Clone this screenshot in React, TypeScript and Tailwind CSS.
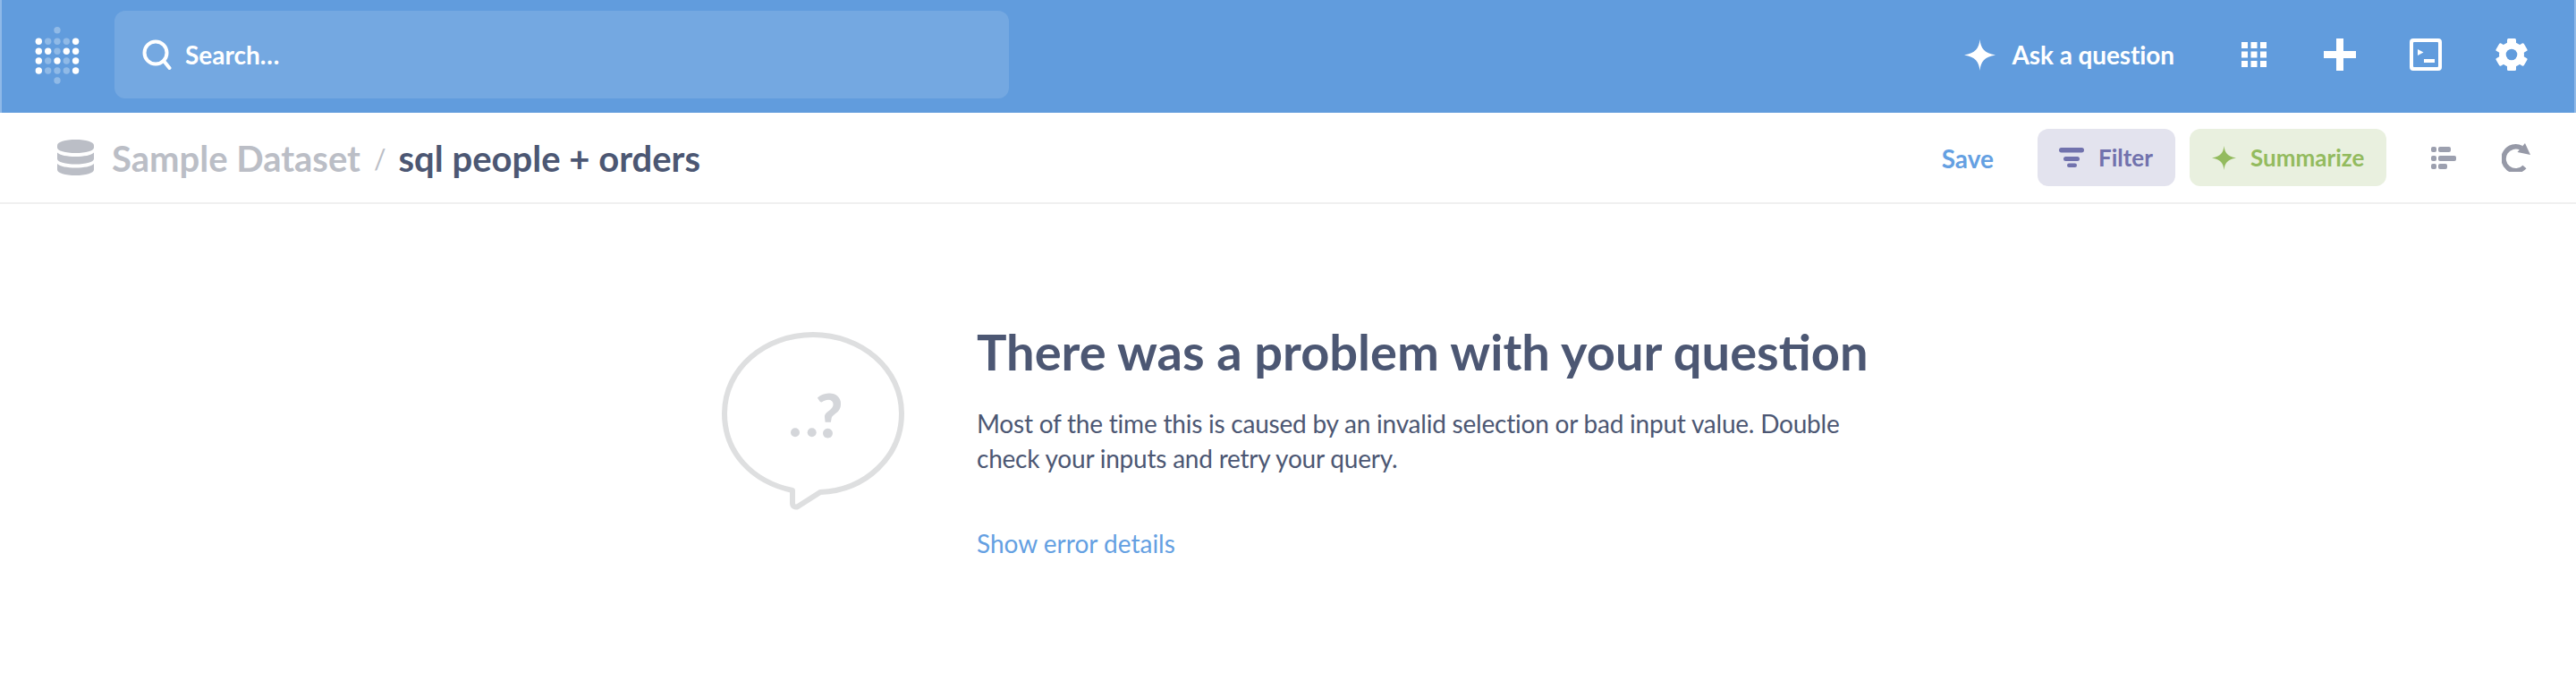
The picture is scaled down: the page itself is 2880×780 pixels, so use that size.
const logoDots = [
  [64, 33.7, 0.3],
  [43.3, 46.3, 1], [53.7, 46.3, 0.3], [64, 46.3, 0.3], [74.3, 46.3, 0.3], [84.6, 46.3, 1],
  [43.3, 57.2, 1], [53.7, 57.2, 1], [64, 57.2, 0.3], [74.3, 57.2, 1], [84.6, 57.2, 1],
  [43.3, 68, 1], [53.7, 68, 0.3], [64, 68, 1], [74.3, 68, 0.3], [84.6, 68, 1],
  [43.3, 79, 1], [53.7, 79, 0.3], [64, 79, 0.3], [74.3, 79, 0.3], [84.6, 79, 1],
  [64, 90, 0.3],
];

const Logo = () => (
  <svg width="126" height="126" viewBox="2 0 126 126" className="shrink-0">
    {logoDots.map(([x, y, o], i) => (
      <circle key={i} cx={x} cy={y} r="3.7" fill="#fff" fillOpacity={o} />
    ))}
  </svg>
);

const Star = ({ size, className }: { size: number; className: string }) => (
  <svg width={size} height={size} viewBox="0 0 32 32" className={className} fill="currentColor">
    <path d="M16 0C17 9.500 20.500 14 32 16 20.500 18 17 22.500 16 32 15 22.500 11.500 18 0 16 11.500 14 15 9.500 16 0Z" />
  </svg>
);

const SearchIcon = () => (
  <svg width="34" height="34" viewBox="0 0 34 34" fill="none" stroke="#fff" strokeWidth="4">
    <circle cx="15" cy="15" r="12.500" />
    <path d="M24 24l6.500 8" strokeLinecap="round" />
  </svg>
);

const GridIcon = () => (
  <svg width="28" height="28" viewBox="0 0 28 28" fill="#fff">
    {[0, 10.5, 21].map((y) =>
      [0, 10.5, 21].map((x) => <rect key={`${x}-${y}`} x={x} y={y} width="7" height="7" />)
    )}
  </svg>
);

const PlusIcon = () => (
  <svg width="36" height="36" viewBox="0 0 36 36" fill="#fff">
    <path d="M14 0h8v14h14v8H22v14h-8V22H0v-8h14z" />
  </svg>
);

const TerminalIcon = () => (
  <svg width="36" height="36" viewBox="0 0 36 36">
    <path
      fillRule="evenodd"
      fill="#fff"
      d="M4 0h28a4 4 0 0 1 4 4v28a4 4 0 0 1-4 4H4a4 4 0 0 1-4-4V4a4 4 0 0 1 4-4zm0 5v26a1 1 0 0 0 1 1h26a1 1 0 0 0 1-1V5a1 1 0 0 0-1-1H5a1 1 0 0 0-1 1z"
    />
    <path fill="#fff" d="M9 12l6.500 3.600L9 19zM16 23h12v4H16z" />
  </svg>
);

const GearIcon = () => (
  <svg width="36" height="36" viewBox="0 0 36 36" fill="#fff">
    <circle cx="18" cy="18" r="14" />
    {[0, 60, 120, 180, 240, 300].map((a) => (
      <rect key={a} x="13" y="0" width="10" height="10" rx="1.500" transform={`rotate(${a} 18 18)`} />
    ))}
    <circle cx="18" cy="18" r="6.300" fill="#619CDD" />
  </svg>
);

const DatabaseIcon = () => (
  <svg width="41" height="40" viewBox="0 0 41 40" fill="#BBBEC6" className="shrink-0">
    <path d="M0 6.500C0 2.500 9 0 20.500 0S41 2.500 41 6.500v2.500c0 3.500-9 6-20.500 6S0 12.500 0 9z" />
    <path d="M0 14.500c3 3 11 4.500 20.500 4.500S38 17.500 41 14.500v7c0 3.500-9 6-20.500 6S0 25 0 21.500z" />
    <path d="M0 27c3 3 11 4.500 20.500 4.500S38 30 41 27v6.500c0 4-9 6.500-20.500 6.500S0 37.500 0 33.500z" />
  </svg>
);

const FilterIcon = () => (
  <svg width="28" height="22" viewBox="0 0 28 22" fill="#7172AD">
    <rect x="0" y="0" width="28" height="5.500" rx="2.700" />
    <rect x="5" y="10" width="18" height="5" rx="2.500" />
    <rect x="9" y="17.500" width="11" height="4.500" rx="2.200" />
  </svg>
);

const ViewsIcon = () => (
  <svg width="28" height="25" viewBox="0 0 28 25" fill="#9CA0AF">
    <rect x="0" y="0" width="6" height="6" rx="2" />
    <rect x="8" y="0" width="14" height="6" rx="2" />
    <rect x="0" y="10" width="6" height="6" rx="2" />
    <rect x="8" y="10" width="20" height="6" rx="2" />
    <rect x="0" y="19" width="6" height="6" rx="2" />
    <rect x="8" y="19" width="10" height="6" rx="2" />
  </svg>
);

const RefreshIcon = () => (
  <svg width="32" height="32" viewBox="0 0 32 32" fill="none">
    <path d="M25.500 26.500A13.500 13.500 0 1 1 22 5.500" stroke="#9699A7" strokeWidth="5.500" />
    <path d="M26 0l6 13-14.500-3z" fill="#9699A7" />
  </svg>
);

const ErrorBubble = () => (
  <svg width="210" height="203" viewBox="47 31 210 203" fill="none" className="mt-[13px] shrink-0">
    <path
      d="M126 208C80 198 50 165 50 122 50 72 95 34 149 34s99 38 99 88c0 48-40 86-91 88l-25 16c-3 1.500-6 0-6-4z"
      stroke="#DEDFE0"
      strokeWidth="6"
      strokeLinejoin="round"
    />
    <circle cx="129" cy="143.300" r="5" fill="#D4D6DA" />
    <circle cx="147.700" cy="143.300" r="5" fill="#D4D6DA" />
    <text
      x="167"
      y="148.500"
      textAnchor="middle"
      fill="#D4D6DA"
      fontSize="66"
      fontWeight="900"
      fontFamily="Lato, sans-serif"
    >
      ?
    </text>
  </svg>
);

export default function App() {
  return (
    <div className="min-h-[780px] bg-white font-['Lato',sans-serif] text-[#4C5773]">
      <nav className="flex h-[126px] items-center border-x-2 border-[#8FB9E8] bg-[#619CDD] pr-[52px] text-white">
        <Logo />
        <div className="mb-1 flex h-[98px] w-[1000px] items-center gap-[14px] rounded-xl bg-white/[0.12] pl-[31px] text-[28px] font-bold">
          <SearchIcon />
          <span>Search…</span>
        </div>
        <div className="mb-1 ml-auto flex items-center">
          <Star size={35} className="text-white" />
          <span className="ml-[19px] text-[28px] font-bold tracking-[-0.1px]">Ask a question</span>
          <span className="ml-[75px]"><GridIcon /></span>
          <span className="ml-[64px]"><PlusIcon /></span>
          <span className="ml-[60px]"><TerminalIcon /></span>
          <span className="ml-[60px]"><GearIcon /></span>
        </div>
      </nav>

      <header className="flex h-[102px] items-center border-b-2 border-[#F0F0F0] pl-16 pr-[51px]">
        <DatabaseIcon />
        <span className="ml-5 mt-[2px] text-[40px] font-bold text-[#BBBEC6]">Sample Dataset</span>
        <span className="ml-[15px] mt-[2px] text-[30px] text-[#BBBEC6]">/</span>
        <span className="ml-[14px] mt-[2px] text-[40px] font-bold">sql people + orders</span>
        <div className="ml-auto flex items-center">
          <span className="mt-[2px] text-[28px] font-bold text-[#64A0E2]">Save</span>
          <div className="ml-[49px] flex h-16 w-[154px] items-center gap-4 rounded-xl bg-[#E3E3EE] pl-6 text-[26px] font-bold text-[#7172AD]">
            <FilterIcon />
            <span>Filter</span>
          </div>
          <div className="ml-4 flex h-16 w-[220px] items-center gap-4 rounded-xl bg-[#E9F0DF] pl-[25px] text-[26px] font-bold text-[#93BB5E]">
            <Star size={27} className="text-[#93BB5E]" />
            <span>Summarize</span>
          </div>
          <span className="ml-[50px]"><ViewsIcon /></span>
          <span className="ml-[51px]"><RefreshIcon /></span>
        </div>
      </header>

      <main className="flex pl-[807px] pt-[130px]">
        <ErrorBubble />
        <div className="ml-[75px]">
          <h1 className="whitespace-nowrap text-[56px] font-bold leading-[70px]">There was a problem with your question</h1>
          <p className="mt-[26px] w-[1000px] text-[28px] leading-[39px] tracking-[-0.22px]">
            Most of the time this is caused by an invalid selection or bad input value. Double check your inputs and retry your query.
          </p>
          <a className="mt-[56px] block text-[28px] leading-[39px] text-[#64A0E2]">Show error details</a>
        </div>
      </main>
    </div>
  );
}
